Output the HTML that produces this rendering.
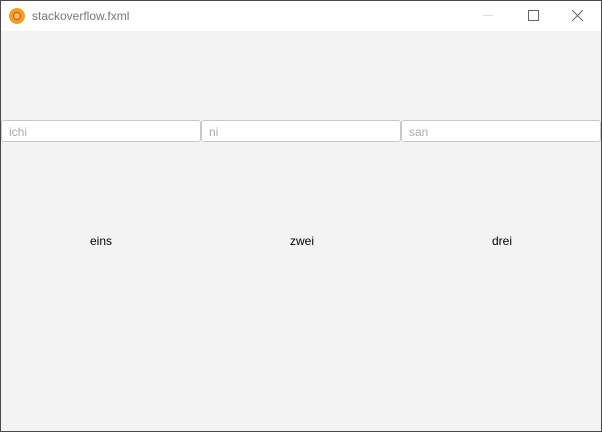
<!DOCTYPE html>
<html><head><style>
body{margin:0;width:602px;height:432px;overflow:hidden;font-family:"Liberation Sans","DejaVu Sans",sans-serif;}
.win{position:absolute;left:0;top:0;width:600px;height:430px;border:1px solid #4a4a4a;background:#f3f3f3;}
.tb{position:absolute;left:0;top:0;width:600px;height:30px;background:#fff;}
.title{position:absolute;left:31px;top:8px;font-size:12px;color:#777;}
.ico{position:absolute;left:8px;top:7px;width:16px;height:16px;border-radius:50%;background:#f0a020;}
.ico:after{content:"";position:absolute;left:4px;top:4px;width:6px;height:6px;border-radius:50%;border:1px solid #e04020;background:#f6c060;}
.tf{position:absolute;top:119px;height:22px;background:#fff;border:1px solid #c8c8c8;border-radius:3px;box-sizing:border-box;font-size:12px;color:#aaa;padding:4px 7px;}
.lbl{position:absolute;top:233px;font-size:12px;color:#000;}
</style></head><body>
<div class="win">
<div class="tb">
<div class="ico"></div>
<div class="title">stackoverflow.fxml</div>
<div style="position:absolute;left:482px;top:14px;width:10px;height:1px;background:#ddd"></div>
<div style="position:absolute;left:527px;top:9px;width:9px;height:9px;border:1px solid #666"></div>
<svg style="position:absolute;left:571px;top:9px" width="11" height="11"><path d="M0 0L11 11M11 0L0 11" stroke="#666" stroke-width="1"/></svg>
</div>
<div class="tf" style="left:0;width:200px">ichi</div>
<div class="tf" style="left:200px;width:200px">ni</div>
<div class="tf" style="left:400px;width:200px">san</div>
<div class="lbl" style="left:89px">eins</div>
<div class="lbl" style="left:289px">zwei</div>
<div class="lbl" style="left:491px">drei</div>
</div>
</body></html>
